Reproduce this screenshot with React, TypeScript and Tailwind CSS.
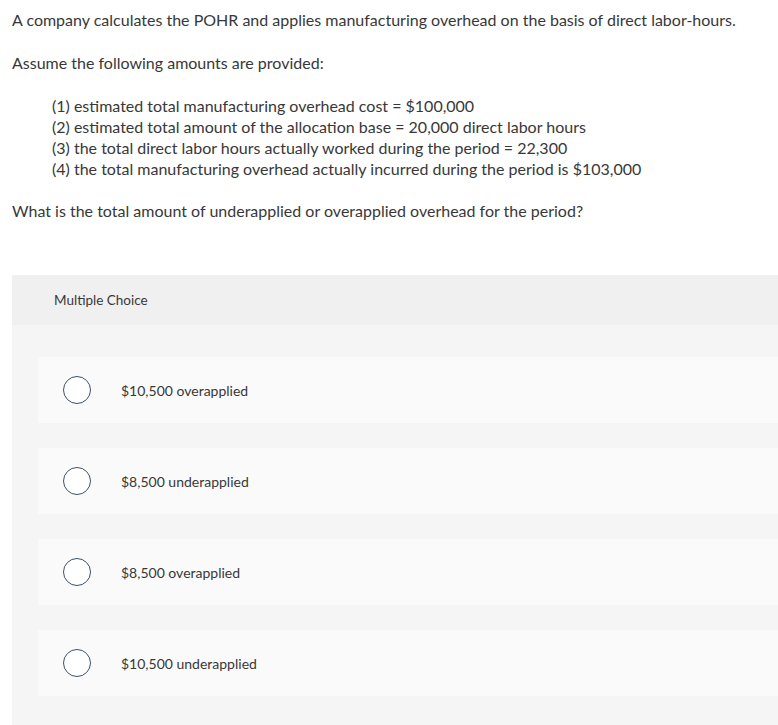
const options = [
  '$10,500 overapplied',
  '$8,500 underapplied',
  '$8,500 overapplied',
  '$10,500 underapplied',
];

const given = [
  '(1) estimated total manufacturing overhead cost = $100,000',
  '(2) estimated total amount of the allocation base = 20,000 direct labor hours',
  '(3) the total direct labor hours actually worked during the period = 22,300',
  '(4) the total manufacturing overhead actually incurred during the period is $103,000',
];

function Radio() {
  return (
    <span className="block h-[28px] w-[28px] shrink-0 rounded-full border-[1.5px] border-[#3d5068] bg-white" />
  );
}

export default function App() {
  return (
    <div className="min-h-[725px] bg-white font-['Lato',sans-serif] text-[#383838]">
      <div className="pl-[12px] pt-[9px] text-[16px] leading-[21.3px]">
        <p>A company calculates the POHR and applies manufacturing overhead on the basis of direct labor-hours.</p>
        <p className="mt-[22px]">Assume the following amounts are provided:</p>
        <div className="mt-[21px] pl-[40px]">
          {given.map((line) => (
            <p key={line}>{line}</p>
          ))}
        </div>
        <p className="mt-[20px]">What is the total amount of underapplied or overapplied overhead for the period?</p>
      </div>

      <section className="ml-[12px] mt-[54px] bg-[#f5f5f5] pb-[30px]">
        <div className="flex h-[50px] items-center bg-[#f0f0f0] pl-[42px] text-[13.5px]">
          Multiple Choice
        </div>
        <div className="flex flex-col gap-[25px] pl-[26px] pt-[32px]">
          {options.map((opt) => (
            <label key={opt} className="flex h-[66px] items-center bg-[#fafafa] pl-[25px]">
              <Radio />
              <span className="ml-[30px] text-[14px]">{opt}</span>
            </label>
          ))}
        </div>
      </section>
    </div>
  );
}
